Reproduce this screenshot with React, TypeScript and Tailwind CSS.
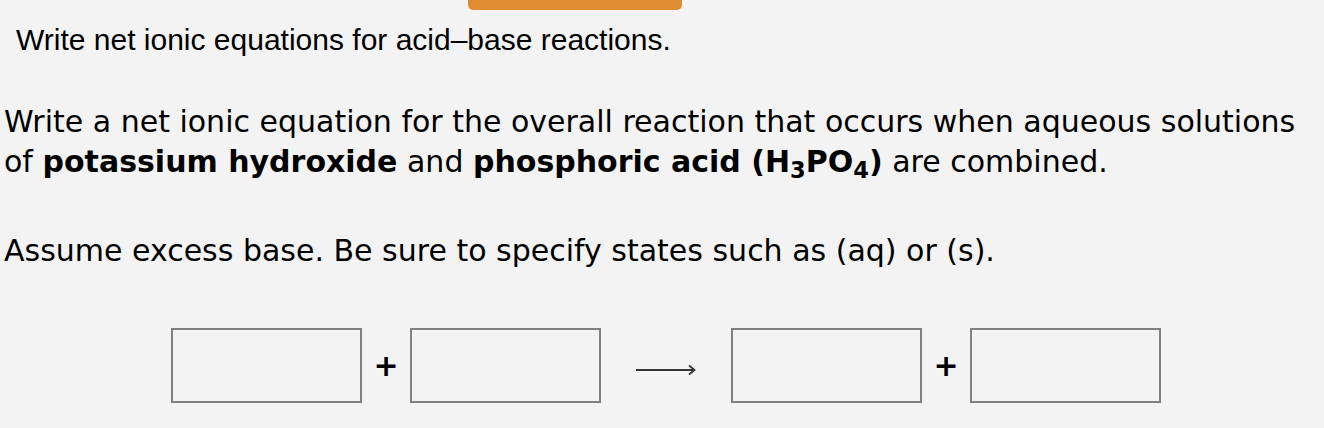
import React from 'react';

const BOX = 'w-[191px] h-[75px] border-2 border-[#808080] bg-[#f3f3f3] shrink-0';

function Plus() {
  return (
    <div className="w-[48px] shrink-0 flex justify-center pt-[1px] text-[30px] leading-none font-bold text-black [font-family:'DejaVu_Sans',sans-serif]">
      +
    </div>
  );
}

function Arrow() {
  return (
    <div className="w-[130px] shrink-0 flex justify-center pt-[8px]">
      <svg width="62" height="12" viewBox="0 0 62 12">
        <line x1="1" y1="6" x2="59" y2="6" stroke="#333" strokeWidth="2" />
        <path d="M54 1.5 L59.5 6 L54 10.5" fill="none" stroke="#333" strokeWidth="1.8" />
      </svg>
    </div>
  );
}

export default function App() {
  return (
    <div className="min-h-[428px] w-[1324px] bg-[#f3f3f3] text-black overflow-hidden">
      {/* orange tab */}
      <div className="ml-[468px] w-[214px] h-[10px] bg-[#df8c33] rounded-b-[5px]" />

      <h1 className="mt-[13px] pl-[16px] text-[30px] leading-[34px] font-normal [font-family:'Liberation_Sans',Arial,sans-serif]">
        Write net ionic equations for acid–base reactions.
      </h1>

      <div className="pl-[4px] text-[30px] leading-[40px] [font-family:'DejaVu_Sans',Verdana,sans-serif]">
        <p className="mt-[45px]">
          Write a net ionic equation for the overall reaction that occurs when aqueous solutions of{' '}
          <b>potassium hydroxide</b> and{' '}
          <b>
            phosphoric acid (H<sub>3</sub>PO<sub>4</sub>)
          </b>{' '}
          are combined.
        </p>
        <p className="mt-[49px]">Assume excess base. Be sure to specify states such as (aq) or (s).</p>
      </div>

      {/* equation row */}
      <div className="mt-[57px] pl-[171px] flex items-center">
        <div className={BOX} />
        <Plus />
        <div className={BOX} />
        <Arrow />
        <div className={BOX} />
        <Plus />
        <div className={BOX} />
      </div>
    </div>
  );
}
